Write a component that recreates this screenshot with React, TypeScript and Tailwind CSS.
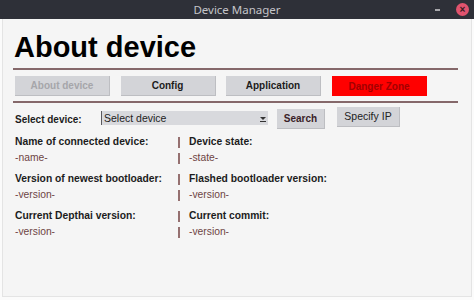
const tabs = [
  { label: 'About device', kind: 'disabled' },
  { label: 'Config', kind: 'normal' },
  { label: 'Application', kind: 'normal' },
  { label: 'Danger Zone', kind: 'danger' },
];

const rows = [
  { left: 'Name of connected device:', right: 'Device state:', bold: true },
  { left: '-name-', right: '-state-', bold: false },
  { left: 'Version of newest bootloader:', right: 'Flashed bootloader version:', bold: true },
  { left: '-version-', right: '-version-', bold: false },
  { left: 'Current Depthai version:', right: 'Current commit:', bold: true },
  { left: '-version-', right: '-version-', bold: false },
];

export default function App() {
  return (
    <div className="w-[474px] h-[300px] bg-[#fbfbfb] overflow-hidden font-['Liberation_Sans',Arial,sans-serif]">
      {/* Title bar */}
      <div className="relative h-[19px] bg-[#2e3038] flex items-center justify-center">
        <span className="text-[11.5px] leading-none text-[#c4c4c8] font-['Noto_Sans',sans-serif]">Device Manager</span>
        <span className="absolute left-[435px] top-[9px] w-[5px] h-[1.5px] bg-[#a8a8ac]" />
        <span className="absolute left-[456px] top-[3px] w-[13px] h-[13px] rounded-full bg-[#e0536e] flex items-center justify-center text-[#3a1a22] text-[10px] leading-none font-bold">
          ×
        </span>
      </div>

      {/* Window body */}
      <div className="mx-[2px] h-[278px] bg-[#f5f5f5] border-x border-b border-[#e4e4e4] pl-[10px] pr-[13px] pt-[14px]">
        <h1 className="ml-[1px] text-[29px] leading-[29px] font-bold text-black">About device</h1>

        <div className="mt-[6px] h-[2px] bg-[#85686a]" />

        {/* Tabs */}
        <div className="mt-[6px] ml-[2px] flex gap-[10.5px]">
          {tabs.map((t) => (
            <div
              key={t.label}
              className={
                t.kind === 'danger'
                  ? 'w-[95px] h-[20px] flex items-center justify-center bg-[#ff0000] text-[#a30000] text-[10px] font-bold'
                  : t.kind === 'disabled'
                    ? 'w-[95px] h-[20px] flex items-center justify-center bg-[#d3d4d8] border-r border-b border-[#bdbec2] text-[#a6a6aa] text-[10px] font-bold'
                    : 'w-[95px] h-[20px] flex items-center justify-center bg-[#d3d4d8] border-r border-b border-[#bdbec2] text-[#1c1c1c] text-[10px] font-bold'
              }
            >
              {t.label}
            </div>
          ))}
        </div>

        <div className="mt-[5px] h-[2px] bg-[#85686a]" />

        {/* Select row */}
        <div className="mt-[4px] ml-[2px] flex items-start">
          <span className="mt-[6px] w-[86px] text-[10px] leading-[14px] font-bold text-[#1c1c1c]">Select device:</span>
          <div className="mt-[4px] w-[167px] h-[14px] bg-[#d8d9dd] border-l border-[#5a5a5e] flex items-center justify-between pl-[2px] pr-[2px]">
            <span className="text-[10.5px] leading-none text-[#222]">Select device</span>
            <span className="flex flex-col items-center mt-[2px]">
              <span className="w-0 h-0 border-x-[3px] border-x-transparent border-t-[3px] border-t-[#333]" />
              <span className="mt-[1px] w-[6px] h-[1px] bg-[#333]" />
            </span>
          </div>
          <div className="mt-[2px] ml-[9px] w-[48px] h-[20px] bg-[#d3d4d8] border-r border-b border-[#bdbec2] flex items-center justify-center text-[10px] font-bold text-[#3a1e28]">
            Search
          </div>
          <div className="ml-[12px] w-[63px] h-[20px] bg-[#d3d4d8] border-r border-b border-[#bdbec2] flex items-center justify-center text-[10.5px] text-[#222]">
            Specify IP
          </div>
        </div>

        {/* Info grid */}
        <div className="mt-[5px] ml-[2px]">
          {rows.map((r, i) => (
            <div key={i} className={r.bold ? 'flex h-[16px] items-center' : 'flex h-[16px] items-center mb-[5px]'}>
              <span
                className={
                  r.bold
                    ? 'w-[163px] whitespace-nowrap text-[10.3px] font-bold text-[#1c1c1c]'
                    : 'w-[163px] whitespace-nowrap text-[10.3px] text-[#6e4444]'
                }
              >
                {r.left}
              </span>
              <span className="w-[2px] h-[11px] bg-[#957070]" />
              <span
                className={
                  r.bold
                    ? 'ml-[9px] whitespace-nowrap text-[10.3px] font-bold text-[#1c1c1c]'
                    : 'ml-[9px] whitespace-nowrap text-[10.3px] text-[#6e4444]'
                }
              >
                {r.right}
              </span>
            </div>
          ))}
        </div>
      </div>
    </div>
  );
}
